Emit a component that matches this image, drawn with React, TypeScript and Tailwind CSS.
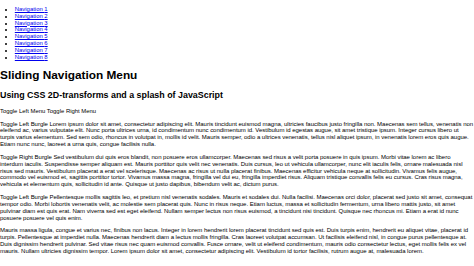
import React from "react";

const navs = [1, 2, 3, 4, 5, 6, 7, 8];

const paras = [
  "Toggle Left Burgle Lorem ipsum dolor sit amet, consectetur adipiscing elit. Mauris tincidunt euismod magna, ultricies faucibus justo fringilla non. Maecenas sem tellus, venenatis non eleifend ac, varius vulputate elit. Nunc porta ultrices urna, id condimentum nunc condimentum id. Vestibulum id egestas augue, sit amet tristique ipsum. Integer cursus libero ut turpis varius elementum. Sed sem odio, rhoncus in volutpat in, mollis id velit. Mauris semper, odio a ultrices venenatis, tellus nisl aliquet ipsum, in venenatis lorem eros quis augue. Etiam nunc nunc, laoreet a urna quis, congue facilisis nulla.",
  "Toggle Right Burgle Sed vestibulum dui quis eros blandit, non posuere eros ullamcorper. Maecenas sed risus a velit porta posuere in quis ipsum. Morbi vitae lorem ac libero interdum iaculis. Suspendisse semper aliquam est. Mauris porttitor quis velit nec venenatis. Duis cursus, leo ut vehicula ullamcorper, nunc elit iaculis felis, ornare malesuada nisl risus sed mauris. Vestibulum placerat a erat vel scelerisque. Maecenas ac risus ut nulla placerat finibus. Maecenas efficitur vehicula neque at sollicitudin. Vivamus felis augue, commodo vel euismod et, sagittis porttitor tortor. Vivamus massa magna, fringilla vel dui eu, fringilla imperdiet risus. Aliquam tristique convallis felis eu cursus. Cras risus magna, vehicula et elementum quis, sollicitudin id ante. Quisque ut justo dapibus, bibendum velit ac, dictum purus.",
  "Toggle Left Burgle Pellentesque mollis sagittis leo, et pretium nisl venenatis sodales. Mauris et sodales dui. Nulla facilisi. Maecenas orci dolor, placerat sed justo sit amet, consequat tempor odio. Morbi lobortis venenatis velit, ac molestie sem placerat quis. Nunc in risus neque. Etiam luctus, massa et sollicitudin fermentum, urna libero mattis justo, sit amet pulvinar diam est quis erat. Nam viverra sed est eget eleifend. Nullam semper lectus non risus euismod, a tincidunt nisi tincidunt. Quisque nec rhoncus mi. Etiam a erat id nunc posuere posuere vel quis enim.",
  "Mauris massa ligula, congue et varius nec, finibus non lacus. Integer in lorem hendrerit lorem placerat tincidunt sed quis est. Duis turpis enim, hendrerit eu aliquet vitae, placerat id turpis. Pellentesque at imperdiet nulla. Maecenas hendrerit diam a lectus mollis fringilla. Cras laoreet volutpat accumsan. Ut facilisis eleifend nisl, in congue purus pellentesque at. Duis dignissim hendrerit pulvinar. Sed vitae risus nec quam euismod convallis. Fusce ornare, velit ut eleifend condimentum, mauris odio consectetur lectus, eget mollis felis ex vel mauris. Nullam ultricies dignissim tempor. Lorem ipsum dolor sit amet, consectetur adipiscing elit. Vestibulum id tortor facilisis, rutrum augue at, malesuada lorem.",
];

export default function App() {
  return (
    <div className="w-[474px] min-h-[266px] bg-white text-black font-['Liberation_Sans',Arial,sans-serif] text-[6px] leading-[6.86px] flow-root">
      <ul className="list-disc pl-[14.8px] my-[5.92px] text-[5.925px]">
        {navs.map((n) => (
          <li key={n}>
            <a href="#" className="text-[#0000EE] underline">
              Navigation {n}
            </a>
          </li>
        ))}
      </ul>
      <h1 className="text-[11.84px] font-bold my-[7.93px] leading-[13.6px]">Sliding Navigation Menu</h1>
      <h2 className="text-[8.88px] font-bold my-[7.37px] leading-[10.2px]">
        Using CSS 2D-transforms and a splash of JavaScript
      </h2>
      <p className="my-[5.92px] text-[5.925px]">Toggle Left Menu Toggle Right Menu</p>
      {paras.map((p, i) => (
        <p key={i} className="my-[5.92px] tracking-[-0.032px]">
          {p}
        </p>
      ))}
    </div>
  );
}
